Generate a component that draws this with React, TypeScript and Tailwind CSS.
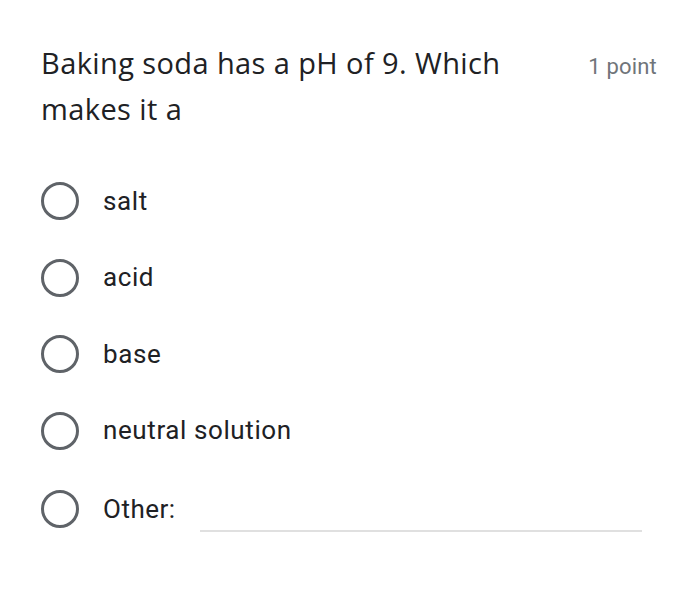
import React from 'react';

const options = ['salt', 'acid', 'base', 'neutral solution'];

const Radio: React.FC = () => (
  <div className="w-[38px] h-[38px] rounded-full border-[3px] border-[#5f6368] shrink-0" />
);

const App: React.FC = () => {
  return (
    <div className="w-[700px] h-[592px] bg-white font-['Roboto',sans-serif] text-[#202124]">
      <div className="flex items-start justify-between pl-[41px] pr-[43px] pt-[40px]">
        <h1 className="w-[480px] text-[29px] leading-[46px] font-['Open_Sans',sans-serif] tracking-[0.4px]">
          Baking soda has a pH of 9. Which makes it a
        </h1>
        <span className="mt-[10px] text-[22px] tracking-[0.2px] text-[#70757a]">1 point</span>
      </div>

      <div className="mt-[31px] pl-[41px] flex flex-col">
        {options.map((o) => (
          <div key={o} className="flex items-center h-[76.5px]">
            <Radio />
            <span className="ml-[24px] text-[26px] tracking-[0.6px]">{o}</span>
          </div>
        ))}
        <div className="flex items-center h-[79px] pt-[1px]">
          <Radio />
          <span className="ml-[24px] text-[26px] tracking-[0.5px]">Other:</span>
          <div className="ml-[24px] w-[442px] self-end mb-[16px] h-[2px] bg-[#e0e0e0]" />
        </div>
      </div>
    </div>
  );
};

export default App;
